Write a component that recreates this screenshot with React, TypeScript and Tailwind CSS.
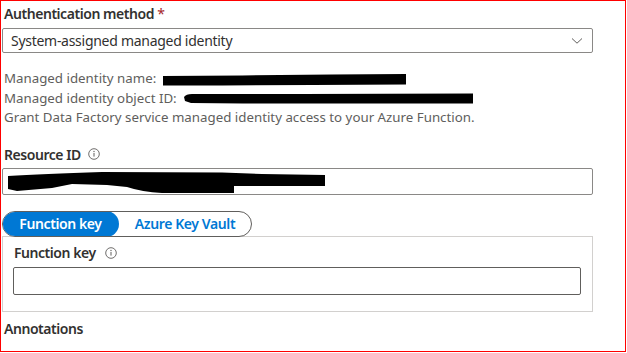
import React from "react";

const font = { fontFamily: '"Noto Sans", "Open Sans", sans-serif' };

function InfoIcon() {
  return (
    <svg width="12" height="12" viewBox="0 0 12 12" className="inline-block">
      <circle cx="6" cy="6" r="5.3" fill="none" stroke="#605e5c" strokeWidth="0.9" />
      <rect x="5.5" y="5" width="1" height="3.6" fill="#605e5c" />
      <circle cx="6" cy="3.5" r="0.65" fill="#605e5c" />
    </svg>
  );
}

export default function App() {
  return (
    <div className="w-[627px] h-[353px] bg-white" style={font}>
      <div className="w-[626px] h-[352px] border border-[#ff0000] pl-px pt-[3px] text-[#323130]">
        <div className="pl-[2px] h-[20px] leading-[20px] text-[14px] tracking-[-0.45px] font-semibold">
          Authentication method <span className="text-[#a4262c] font-normal">*</span>
        </div>
        <div className="mt-[4px] w-[591px] h-[25px] border border-[#8a8886] rounded-[2px] flex items-center justify-between pl-[8px] pr-[9px] text-[14px] tracking-[-0.28px]">
          <span>System-assigned managed identity</span>
          <svg width="12" height="8" viewBox="0 0 12 8">
            <path d="M1 1.5 L6 6.2 L11 1.5" fill="none" stroke="#605e5c" strokeWidth="1" />
          </svg>
        </div>
        <div className="mt-[16px] pl-[2px] text-[13.3px] leading-[19.5px] text-[#605e5c]">
          <div className="flex items-center">
            <span>Managed identity name:</span>
            <svg width="250" height="14" viewBox="0 0 250 14" className="ml-[6px]">
              <path d="M1 4 L80 3.5 L170 2.5 L244 2 L244 12.5 L150 13 L60 13.5 L1 13.5 Z" fill="#000" />
            </svg>
          </div>
          <div className="flex items-center">
            <span>Managed identity object ID:</span>
            <svg width="292" height="14" viewBox="0 0 292 14" className="ml-[6px]">
              <path d="M1 6 Q3 3 9 3 L120 3 L290 2.5 L290 12.5 L60 12.5 L8 12 L2 10 Z" fill="#000" />
            </svg>
          </div>
          <div>Grant Data Factory service managed identity access to your Azure Function.</div>
        </div>
        <div className="mt-[17px] pl-[2px] h-[20px] flex items-center gap-[7px] text-[14px] tracking-[-0.45px] font-semibold">
          <span>Resource ID</span>
          <span className="-mt-[5px]"><InfoIcon /></span>
        </div>
        <div className="mt-[3px] w-[591px] h-[27px] border border-[#8a8886] rounded-[2px] relative">
          <svg width="330" height="27" viewBox="0 0 330 27" className="absolute left-[-1px] top-[-1px]">
            <path d="M6 8 Q40 6 100 4 L220 4.5 L260 6 L323 7 L323 18 L232 18 L232 25 L160 25 Q140 24 125 19 L105 17 L70 16 L50 20 L15 23 L6 21 Z" fill="#000" />
          </svg>
        </div>
        <div className="mt-[16px] relative">
          <div className="flex w-[250px] h-[26px] rounded-full border border-[#605e5c] text-[14px] tracking-[-0.4px] font-semibold overflow-hidden relative z-10 bg-white">
            <div className="w-[117px] bg-[#0078d4] text-white rounded-full flex items-center justify-center -ml-px -my-px h-[26px]">
              Function key
            </div>
            <div className="flex-1 flex items-center justify-center text-[#0078d4]">Azure Key Vault</div>
          </div>
          <div className="-mt-px w-[591px] h-[76px] border border-[#d2d0ce] px-[10px] pt-[6px]">
            <div className="h-[20px] flex items-center gap-[9px] text-[14px] tracking-[-0.45px] font-semibold pl-px">
              <span>Function key</span>
              <span className="-mt-[3px]"><InfoIcon /></span>
            </div>
            <div className="mt-[4px] w-[568px] h-[28px] border border-[#605e5c] rounded-[2px]" />
          </div>
        </div>
        <div className="mt-[7px] pl-[2px] h-[20px] leading-[20px] text-[14px] tracking-[-0.45px] font-semibold">Annotations</div>
      </div>
    </div>
  );
}
